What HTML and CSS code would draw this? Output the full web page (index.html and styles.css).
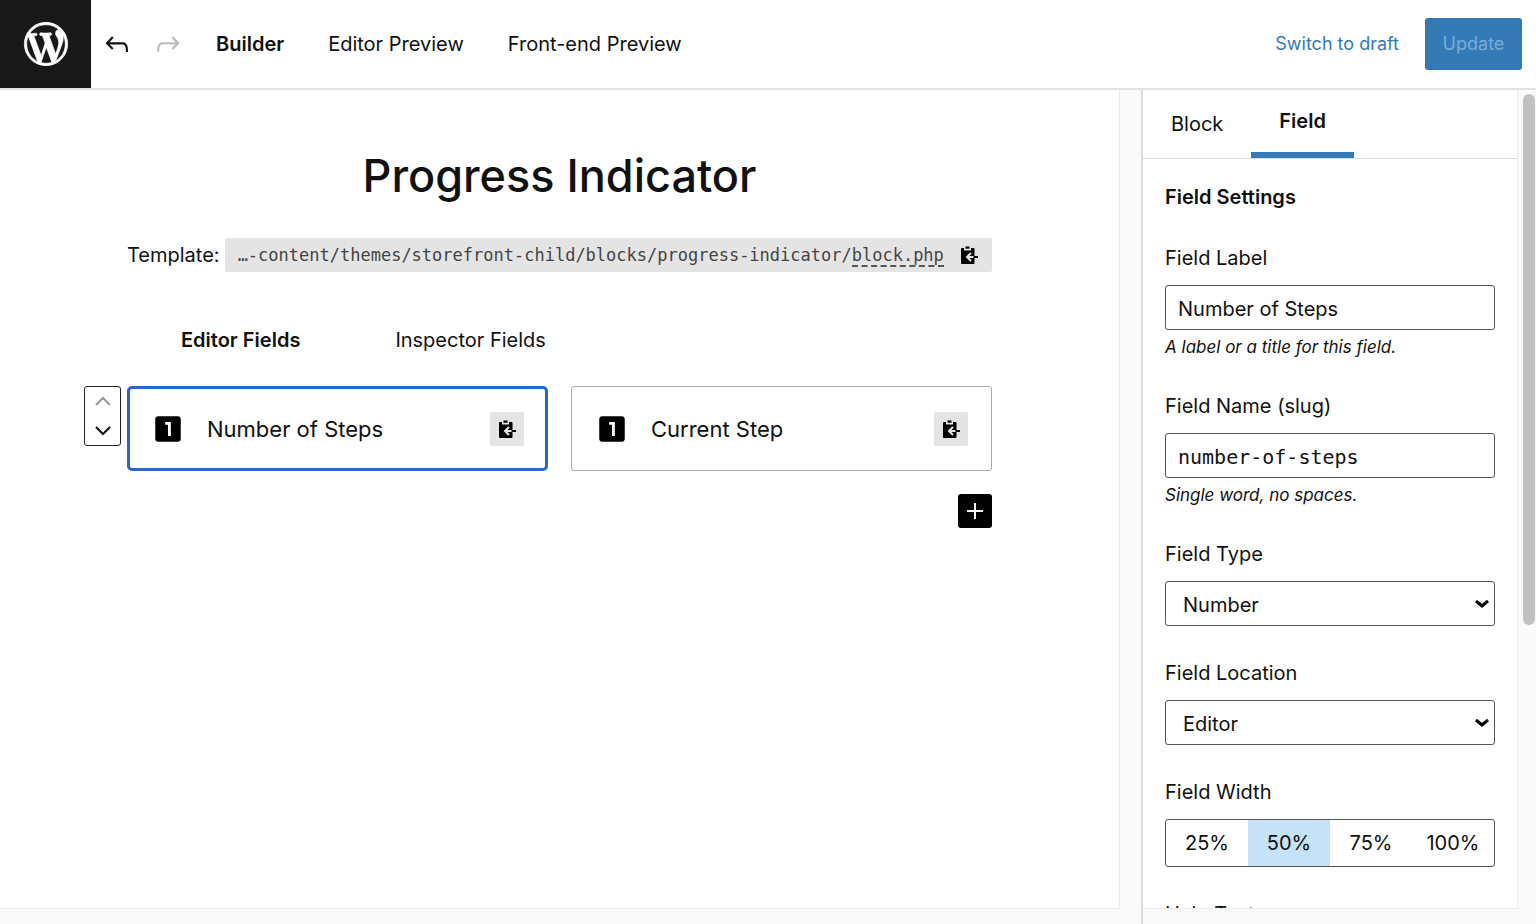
FILE: index.html
```html
<!DOCTYPE html>
<html lang="en">
<head>
  <meta charset="UTF-8">
  <meta name="viewport" content="width=device-width, initial-scale=1.0">
  <title>Progress Indicator - Block Builder</title>
  <link rel="stylesheet" href="styles.css">
</head>
<body>
  <!-- shared icons -->
  <svg class="sprite" aria-hidden="true">
    <symbol id="icon-number" viewBox="0 0 24 24">
      <path d="M19 3H5c-1.1 0-2 .9-2 2v14c0 1.1.9 2 2 2h14c1.1 0 2-.9 2-2V5c0-1.1-.9-2-2-2zm-5 14h-2V9h-2V7h4v10z"/>
    </symbol>
    <symbol id="icon-clipboard" viewBox="0 0 20 20">
      <path d="M3 3h2v2.5h7V3h2.500a1 1 0 0 1 1 1v14a1 1 0 0 1-1 1H3a1 1 0 0 1-1-1V4a1 1 0 0 1 1-1z"/>
      <path d="M6.500 1.500h4v2.200h-4z"/>
      <path d="M12 8l-4 4 4 4M8 12h7.500" fill="none" stroke="#e4e4e4" stroke-width="2"/>
      <path d="M14.500 11h4.500v2h-4.500z"/>
    </symbol>
  </svg>

  <header class="header">
    <a class="logo" href="#" aria-label="View blocks">
      <svg width="52" height="52" viewBox="-2 -2 24 24" fill="currentColor" stroke="currentColor" stroke-width=".3">
        <path d="M20 10c0-5.510-4.490-10-10-10C4.480 0 0 4.490 0 10c0 5.520 4.480 10 10 10 5.510 0 10-4.480 10-10zM7.780 15.370L4.370 6.220c.55-.02 1.170-.08 1.170-.08.5-.06.44-1.130-.06-1.110 0 0-1.450.11-2.370.11-.18 0-.37 0-.58-.01C4.120 2.690 6.870 1.110 10 1.110c2.330 0 4.450.87 6.050 2.340-.68-.11-1.650.39-1.650 1.580 0 .74.45 1.360.9 2.100.35.61.55 1.360.55 2.460 0 1.490-1.400 5-1.400 5l-3.030-8.370c.54-.02.82-.17.82-.17.5-.05.44-1.250-.06-1.220 0 0-1.440.12-2.380.12-.87 0-2.330-.12-2.330-.12-.5-.03-.56 1.200-.06 1.220l.92.08 1.260 3.410zM17.410 10c.24-.64.74-1.870.43-4.250.7 1.290 1.050 2.710 1.050 4.250 0 3.290-1.730 6.240-4.400 7.780.97-2.590 1.940-5.200 2.920-7.780zM6.100 18.090C3.120 16.650 1.110 13.530 1.110 10c0-1.300.23-2.480.72-3.590C3.250 10.300 4.670 14.200 6.100 18.090zm4.030-6.630l2.580 6.980c-.86.29-1.760.45-2.710.45-.79 0-1.570-.11-2.290-.33.81-2.380 1.620-4.740 2.420-7.100z"/>
      </svg>
    </a>
    <div class="history">
      <button type="button" aria-label="Undo">
        <svg width="34" height="34" viewBox="0 0 24 24" fill="currentColor"><path d="M18.3 11.7c-.6-.6-1.4-.9-2.3-.9H6.700l2.900-3.300-1.100-1-4.500 5L8.500 16l1-1-2.700-2.700H16c.5 0 .9.2 1.300.5 1 1 1 3.400 1 4.500v.3h1.500v-.2c0-1.500 0-4.300-1.500-5.700z"/></svg>
      </button>
      <button type="button" aria-label="Redo" disabled>
        <svg width="34" height="34" viewBox="0 0 24 24" fill="currentColor"><path d="M15.6 6.500l-1.100 1 2.900 3.300H8c-.9 0-1.700.3-2.300.9-1.400 1.500-1.400 4.200-1.400 5.600v.2h1.500v-.3c0-1.100 0-3.500 1-4.500.3-.3.7-.5 1.300-.5h9.200L14.500 15l1.100 1.100 4.600-4.600-4.600-5z"/></svg>
      </button>
    </div>
    <nav class="modes">
      <button type="button" class="active">Builder</button>
      <button type="button">Editor Preview</button>
      <button type="button">Front-end Preview</button>
    </nav>
    <div class="actions">
      <button type="button" class="link">Switch to draft</button>
      <button type="button" class="update" disabled>Update</button>
    </div>
  </header>

  <div class="layout">
    <main class="editor">
      <div class="canvas">
        <h1>Progress Indicator</h1>

        <div class="template">
          <span>Template:</span>
          <div class="template-path">
            <code>…-content/themes/storefront-child/blocks/progress-indicator/<span class="file">block.php</span></code>
            <button type="button" aria-label="Copy path"><svg width="20" height="20"><use href="#icon-clipboard"/></svg></button>
          </div>
        </div>

        <div class="location-tabs">
          <button type="button" class="active">Editor Fields</button>
          <button type="button">Inspector Fields</button>
        </div>

        <div class="fields">
          <div class="mover">
            <button type="button" aria-label="Move up" disabled>
              <svg width="18" height="12" viewBox="0 0 18 12"><path d="M2 10l7-7 7 7"/></svg>
            </button>
            <button type="button" aria-label="Move down">
              <svg width="18" height="12" viewBox="0 0 18 12"><path d="M2 2l7 7 7-7"/></svg>
            </button>
          </div>
          <div class="field selected">
            <svg width="34" height="34"><use href="#icon-number"/></svg>
            <span class="field-name">Number of Steps</span>
            <button type="button" class="copy" aria-label="Copy field code"><svg width="20" height="20"><use href="#icon-clipboard"/></svg></button>
          </div>
          <div class="field">
            <svg width="34" height="34"><use href="#icon-number"/></svg>
            <span class="field-name">Current Step</span>
            <button type="button" class="copy" aria-label="Copy field code"><svg width="20" height="20"><use href="#icon-clipboard"/></svg></button>
          </div>
        </div>

        <button type="button" class="add" aria-label="Add field">
          <svg width="18" height="18" viewBox="0 0 18 18"><path d="M9 1v16M1 9h16"/></svg>
        </button>
      </div>
    </main>

    <aside class="sidebar">
      <div class="panel">
        <div class="panel-tabs">
          <button type="button">Block</button>
          <button type="button" class="active">Field</button>
        </div>

        <form class="settings">
          <h2>Field Settings</h2>

          <div class="control">
            <label for="field-label">Field Label</label>
            <input type="text" id="field-label" value="Number of Steps">
            <p>A label or a title for this field.</p>
          </div>

          <div class="control">
            <label for="field-slug">Field Name (slug)</label>
            <input type="text" id="field-slug" class="mono" value="number-of-steps">
            <p>Single word, no spaces.</p>
          </div>

          <div class="control">
            <label for="field-type">Field Type</label>
            <div class="select">
              <select id="field-type">
                <option>Number</option>
              </select>
              <svg width="14" height="10" viewBox="0 0 14 10"><path d="M1 2l6 5 6-5"/></svg>
            </div>
          </div>

          <div class="control">
            <label for="field-location">Field Location</label>
            <div class="select">
              <select id="field-location">
                <option>Editor</option>
              </select>
              <svg width="14" height="10" viewBox="0 0 14 10"><path d="M1 2l6 5 6-5"/></svg>
            </div>
          </div>

          <div class="control">
            <span class="label" id="width-label">Field Width</span>
            <div class="widths" role="group" aria-labelledby="width-label">
              <button type="button">25%</button>
              <button type="button" class="active">50%</button>
              <button type="button">75%</button>
              <button type="button">100%</button>
            </div>
          </div>

          <div class="control">
            <label for="help-text">Help Text</label>
            <input type="text" id="help-text">
          </div>
        </form>
      </div>
      <div class="scrollbar"><div class="thumb"></div></div>
    </aside>
  </div>
</body>
</html>
```
FILE: styles.css
```css
* {
  box-sizing: border-box;
}

body {
  margin: 0;
  height: 100vh;
  display: flex;
  flex-direction: column;
  overflow: hidden;
  font-family: Inter, sans-serif;
  font-size: 20px;
  line-height: 24px;
  color: #111;
  background: #fafafa;
}

button {
  padding: 0;
  border: 0;
  background: none;
  font: inherit;
  color: inherit;
  cursor: pointer;
}

button.active {
  font-weight: 600;
}

svg {
  display: block;
}

.sprite {
  position: absolute;
  width: 0;
  height: 0;
}

/* Header */
.header {
  flex: none;
  display: flex;
  align-items: center;
  height: 90px;
  border-bottom: 2px solid #e2e2e2;
  background: #fff;
}

.logo {
  display: flex;
  align-items: center;
  justify-content: center;
  width: 91px;
  height: 88px;
  background: #181818;
  color: #fff;
}

.history {
  display: flex;
  gap: 17px;
  margin-left: 9px;
}

.history button:disabled {
  color: #bbb;
}

.modes {
  display: flex;
  gap: 44px;
  margin-left: 31px;
}

.actions {
  display: flex;
  align-items: center;
  gap: 26px;
  margin-left: auto;
  margin-right: 14px;
  font-size: 18px;
}

.link {
  color: #337ab7;
}

.update {
  width: 97px;
  height: 52px;
  border-radius: 3px;
  background: #337ab7;
  color: #79add7;
}

/* Editor */
.layout {
  flex: 1;
  display: flex;
  min-height: 0;
}

.editor {
  flex: 1;
  margin: 0 21px 15px 0;
  border: solid #ececec;
  border-width: 0 1px 1px 0;
  background: #fff;
}

.canvas {
  max-width: 865px;
  margin: 0 auto;
  padding-top: 54px;
}

h1 {
  margin: 0;
  font-size: 45px;
  font-weight: 500;
  line-height: 64px;
  text-align: center;
}

.template {
  display: flex;
  align-items: center;
  gap: 5px;
  margin-top: 30px;
}

.template-path {
  flex: 1;
  display: flex;
  align-items: center;
  justify-content: space-between;
  height: 34px;
  padding: 0 13px;
  border-radius: 2px;
  background: #e4e4e4;
}

code,
.mono {
  font-family: "DejaVu Sans Mono", monospace;
}

code {
  font-size: 17px;
  color: #444;
}

.file {
  border-bottom: 2px dashed #555;
}

.location-tabs {
  display: flex;
  gap: 95px;
  margin: 56px 0 34px;
  padding-left: 54px;
}

.fields {
  position: relative;
  display: flex;
  gap: 23px;
}

.mover {
  position: absolute;
  top: 0;
  left: -43px;
  display: flex;
  flex-direction: column;
  justify-content: space-between;
  align-items: center;
  width: 37px;
  height: 60px;
  padding: 8px 0;
  border: 1px solid #222;
  border-radius: 3px;
}

.mover path {
  fill: none;
  stroke: #111;
  stroke-width: 2;
}

.mover button:disabled path {
  stroke: #999;
}

.field {
  flex: 1;
  display: flex;
  align-items: center;
  height: 85px;
  padding: 0 23px;
  border: 1px solid #aaa;
  border-radius: 3px;
  font-size: 22px;
}

.field.selected {
  padding: 0 21px;
  border: 3px solid #2768c9;
  border-radius: 5px;
}

.field-name {
  flex: 1;
  margin-left: 22px;
}

.copy {
  display: flex;
  align-items: center;
  justify-content: center;
  width: 34px;
  height: 34px;
  border-radius: 2px;
  background: #e4e4e4;
}

.add {
  display: flex;
  align-items: center;
  justify-content: center;
  width: 34px;
  height: 34px;
  margin: 23px 0 0 auto;
  border-radius: 3px;
  background: #000;
}

.add path {
  stroke: #fff;
  stroke-width: 2;
}

/* Sidebar */
.sidebar {
  flex: none;
  display: flex;
  width: 395px;
  border-left: 2px solid #ddd;
}

.panel {
  flex: 1;
  margin-bottom: 15px;
  border: solid #ececec;
  border-width: 0 1px 1px 0;
  background: #fff;
  overflow: hidden;
}

.panel-tabs {
  display: flex;
  height: 69px;
  border-bottom: 1px solid #ddd;
}

.panel-tabs button {
  padding: 0 28px;
}

.panel-tabs .active {
  border-bottom: 6px solid #337ab7;
}

.settings {
  padding: 26px 22px 0;
}

h2 {
  margin: 0 0 37px;
  font-size: 20px;
  font-weight: 600;
  line-height: 24px;
}

.control {
  margin-bottom: 35px;
}

.control label,
.control .label {
  display: block;
  margin-bottom: 15px;
}

.control input,
.control select {
  display: block;
  width: 100%;
  height: 45px;
  padding: 2px 12px 0;
  border: 1px solid #555;
  border-radius: 3px;
  background: #fff;
  font-size: 20px;
  color: #111;
}

.control input {
  font-family: Inter, sans-serif;
}

.control input.mono {
  font-family: "DejaVu Sans Mono", monospace;
}

.control select {
  appearance: none;
  padding-left: 17px;
  font-family: Inter, sans-serif;
}

.control p {
  margin: 5px 0 0;
  font-size: 17px;
  font-style: italic;
}

.select {
  position: relative;
}

.select svg {
  position: absolute;
  top: 18px;
  right: 6px;
  pointer-events: none;
}

.select path {
  fill: none;
  stroke: #000;
  stroke-width: 3;
}

.widths {
  display: flex;
  height: 48px;
  border: 1px solid #555;
  border-radius: 3px;
}

.widths button {
  flex: 1;
}

.widths .active {
  background: #c5e2f7;
  font-weight: 400;
}

.scrollbar {
  width: 18px;
  padding: 4px 1px 0 5px;
}

.thumb {
  height: 64%;
  border-radius: 6px;
  background: #c1c1c1;
}
```
